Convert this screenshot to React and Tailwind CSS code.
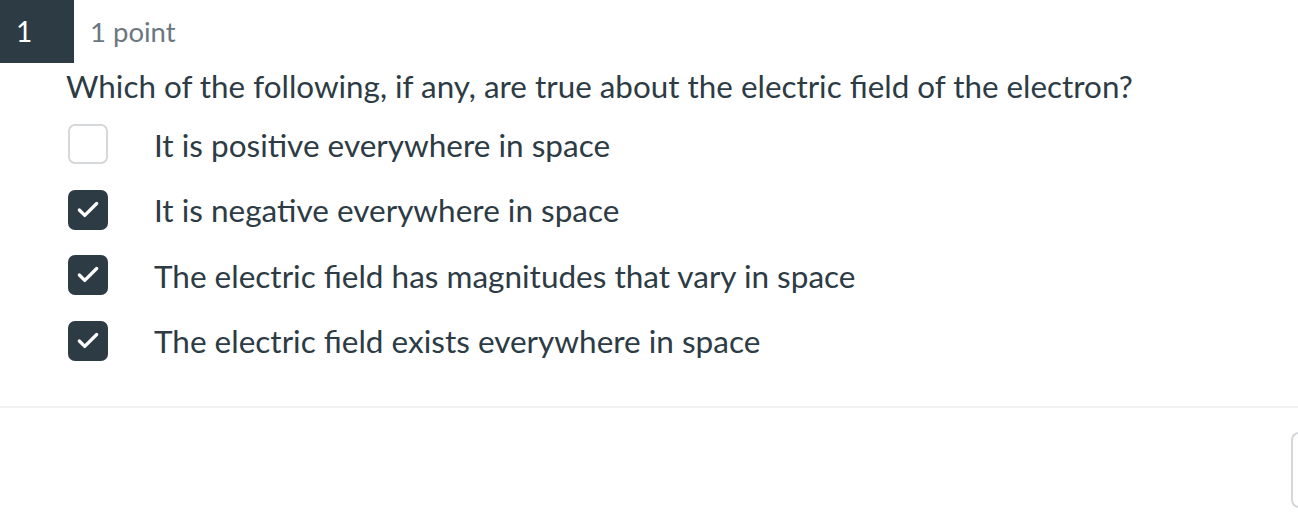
import { Check } from "lucide-react";

const options = [
  { text: "It is positive everywhere in space", checked: false },
  { text: "It is negative everywhere in space", checked: true },
  { text: "The electric field has magnitudes that vary in space", checked: true },
  { text: "The electric field exists everywhere in space", checked: true },
];

export default function App() {
  return (
    <div className="w-[1298px] h-[522px] bg-white overflow-hidden text-[#2d3b45] font-['Lato',sans-serif]">
      {/* HEADER */}
      <div className="flex items-center h-[63px]">
        <div className="w-[74px] h-[63px] bg-[#2d3b45] text-white flex items-center pl-[16px] pb-[2px] text-[28px]">
          1
        </div>
        <span className="ml-[16px] text-[27.5px] text-[#6b7780]">1 point</span>
      </div>

      {/* QUESTION */}
      <div className="pl-[66px]">
        <p className="text-[31.4px] leading-[48px] -mt-[1px]">
          Which of the following, if any, are true about the electric field of the electron?
        </p>

        <div className="mt-[14px] flex flex-col gap-[25.5px]">
          {options.map((o) => (
            <div key={o.text} className="flex items-center h-[40px]">
              <div
                className={
                  o.checked
                    ? "ml-[2px] w-[40px] h-[40px] rounded-[7px] bg-[#2d3b45] flex items-center justify-center"
                    : "ml-[2px] w-[40px] h-[40px] rounded-[7px] border-2 border-[#d5d8da] bg-white"
                }
              >
                {o.checked && <Check size={26} strokeWidth={3} className="text-white" />}
              </div>
              <span className="ml-[46px] pt-[3px] text-[31.5px]">{o.text}</span>
            </div>
          ))}
        </div>
      </div>

      {/* FOOTER */}
      <div className="mt-[45px] h-[2px] bg-[#f2f2f2]" />
      <div className="flex justify-end mt-[24px]">
        <div className="w-[8px] h-[76px] border-2 border-r-0 border-[#d5d8da] rounded-l-[8px] -mr-[1px]" />
      </div>
    </div>
  );
}
